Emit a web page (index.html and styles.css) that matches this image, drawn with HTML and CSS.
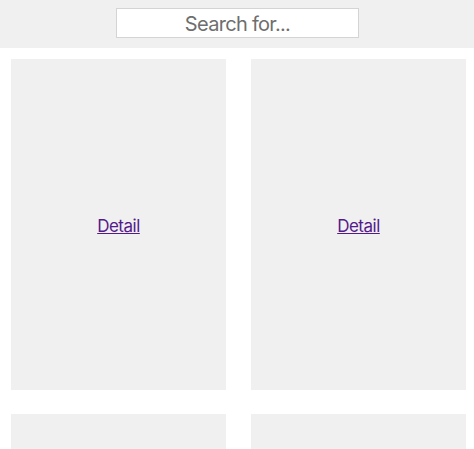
FILE: index.html
```html
<!DOCTYPE html>
<html>
<head>
<meta charset="utf-8">
<link rel="stylesheet" href="styles.css">
</head>
<body>
<header class="topbar">
  <input class="search" type="text" placeholder="Search for...">
</header>
<main class="grid">
  <div class="card"><a class="detail" href="#">Detail</a></div>
  <div class="card"><a class="detail" href="#">Detail</a></div>
  <div class="card"></div>
  <div class="card"></div>
</main>
</body>
</html>
```
FILE: styles.css
```css
html, body {
  margin: 0;
  padding: 0;
  background: #ffffff;
  font-family: Inter, "Liberation Sans", sans-serif;
  overflow: hidden;
}
.topbar {
  height: 48px;
  background: #f0f0f0;
  display: flex;
  justify-content: center;
  align-items: flex-start;
  padding-top: 8px;
  box-sizing: border-box;
}
.search {
  width: 243px;
  height: 30px;
  box-sizing: border-box;
  border: 1px solid #d4d4d4;
  background: #ffffff;
  text-align: center;
  font-family: Inter, "Liberation Sans", sans-serif;
  font-size: 20px;
  letter-spacing: -0.7px;
  color: #333;
  padding: 2px 0 0 0;
  margin-left: 1px;
}
.search::placeholder {
  color: #6e6e6e;
}
.grid {
  display: grid;
  grid-template-columns: 215px 215px;
  grid-template-rows: 331px 331px;
  column-gap: 25px;
  row-gap: 24px;
  padding: 11px 0 0 11px;
}
.card {
  background: #f0f0f0;
  display: flex;
  align-items: center;
  justify-content: center;
}
.detail {
  color: #551a8b;
  font-size: 17px;
  letter-spacing: -0.5px;
  text-decoration: underline;
  margin-top: 2px;
}
```
